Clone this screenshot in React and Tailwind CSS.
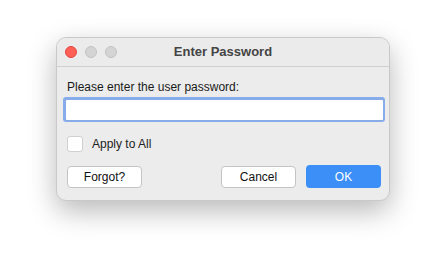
export default function App() {
  return (
    <div className="w-[447px] h-[275px] bg-white flex items-start justify-start" style={{ fontFamily: '"Liberation Sans", Arial, sans-serif' }}>
      <div className="ml-[56px] mt-[37px] w-[334px] h-[164px] rounded-[10px] bg-[#ececec] border border-[#c9c9c9] shadow-[0_10px_28px_rgba(0,0,0,0.28)] flex flex-col overflow-hidden">
        <div className="h-[29px] flex items-center relative border-b border-[#d0d0d0] bg-[#ebebeb]">
          <div className="flex gap-[8px] ml-[8px]">
            <div className="w-[12px] h-[12px] rounded-full bg-[#fe5f57] border border-[#e2463f]" />
            <div className="w-[12px] h-[12px] rounded-full bg-[#d4d4d4] border border-[#c2c2c2]" />
            <div className="w-[12px] h-[12px] rounded-full bg-[#d4d4d4] border border-[#c2c2c2]" />
          </div>
          <div className="absolute inset-0 flex items-center justify-center text-[13px] font-bold text-[#444]">
            Enter Password
          </div>
        </div>
        <div className="flex flex-col pl-[9px] pr-[8px]">
          <div className="mt-[13px] text-[12px] leading-[14px] text-[#1a1a1a] pl-[1px]">Please enter the user password:</div>
          <div className="mt-[3px] -ml-[3px] w-[322px] h-[25px] rounded-[3px] bg-[#88acea] p-[2.5px]">
            <div className="w-full h-full bg-white rounded-[1px]" />
          </div>
          <div className="mt-[13px] flex items-center">
            <div className="w-[16px] h-[16px] rounded-[3px] bg-white border border-[#d0d0d0] ml-[1px]" />
            <span className="ml-[9px] text-[12px] text-[#222]">Apply to All</span>
          </div>
          <div className="mt-[12px] flex items-center">
            <button className="ml-[1px] w-[75px] h-[22px] rounded-[4px] bg-white border border-[#c4c4c4] text-[12px] text-[#111]">Forgot?</button>
            <div className="flex-1" />
            <button className="w-[75px] h-[22px] rounded-[4px] bg-white border border-[#c4c4c4] text-[12px] text-[#111]">Cancel</button>
            <button className="ml-[10px] w-[75px] h-[23px] rounded-[4px] bg-[#3b8ff7] text-[12px] text-white">OK</button>
          </div>
        </div>
      </div>
    </div>
  );
}
